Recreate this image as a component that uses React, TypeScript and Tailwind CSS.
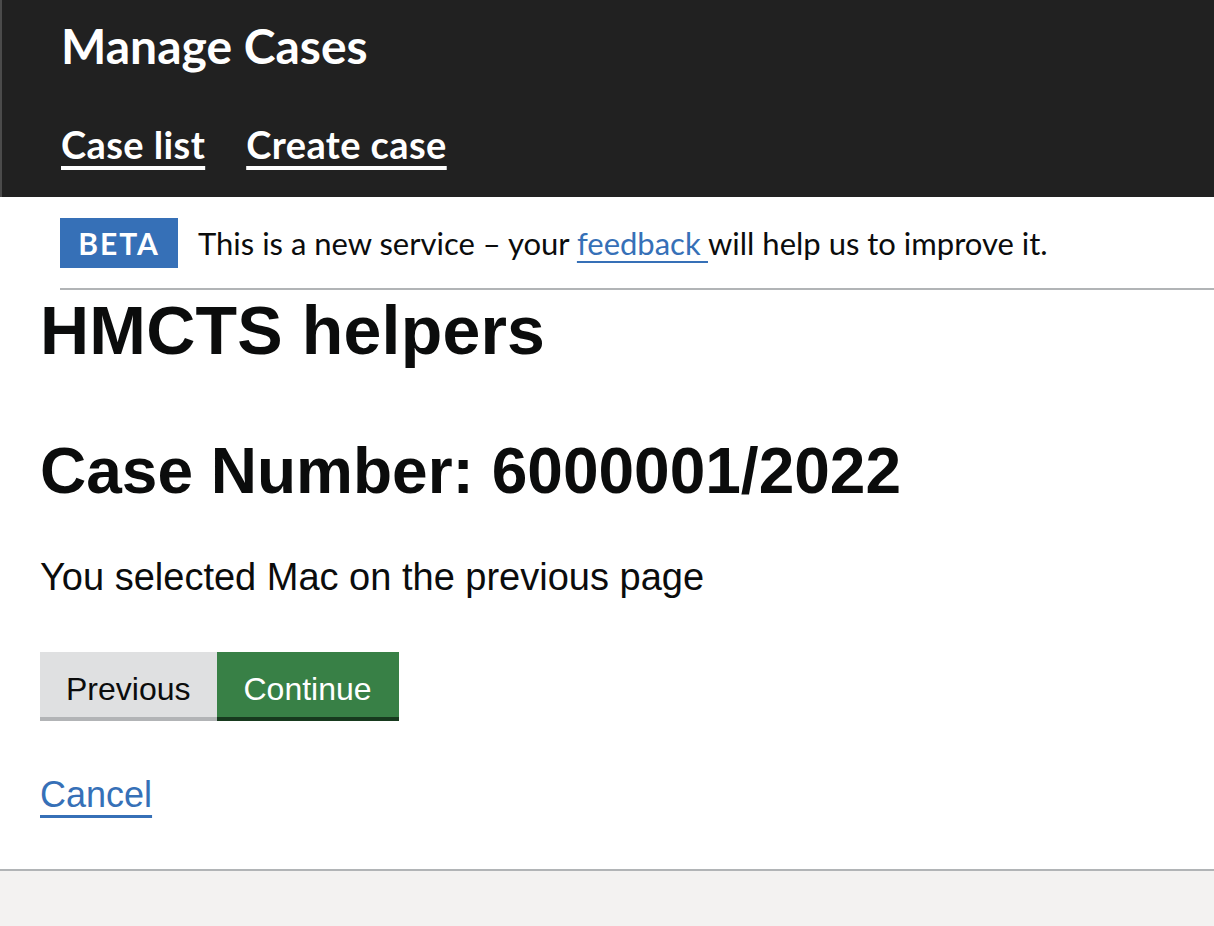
import React from "react";

export default function App() {
  return (
    <div className="min-h-screen flex flex-col bg-white text-[#0b0c0c] font-['Liberation_Sans',Arial,sans-serif]">
      <header className="h-[197px] bg-[#212121] border-l-2 border-[#4b4b4b] pl-[59px] pt-[22px] font-['Lato','Noto_Sans',sans-serif]">
        <div className="text-[48px] leading-[48px] font-bold text-white">Manage Cases</div>
        <nav className="mt-[55px] flex gap-[41px]">
          <a href="#" className="text-[38px] leading-[38px] font-bold tracking-[0.4px] text-white underline decoration-[4px] underline-offset-[7px]">Case list</a>
          <a href="#" className="text-[38px] leading-[38px] font-bold tracking-[0.4px] text-white underline decoration-[4px] underline-offset-[7px]">Create case</a>
        </nav>
      </header>

      <div className="pl-[60px] pt-[21px] font-['Lato','Noto_Sans',sans-serif]">
        <div className="flex items-center gap-[20px]">
          <span className="h-[50px] w-[118px] flex items-center justify-center bg-[#3670b7] text-white font-bold text-[30px] tracking-[2px]">BETA</span>
          <p className="text-[31px] leading-[31px] text-[#0b0c0c]">
            This is a new service – your{" "}
            <a href="#" className="text-[#3670b7] underline decoration-[2px] underline-offset-[6px]">feedback </a>
            will help us to improve it.
          </p>
        </div>
        <div className="mt-[20px] border-b-2 border-[#b1b4b6]" />
      </div>

      <main className="pl-[40px] pt-[6px] pb-[55px]">
        <h1 className="text-[68px] leading-[68px] font-bold tracking-[0.2px]">HMCTS helpers</h1>
        <h2 className="mt-[75px] text-[64px] leading-[64px] font-bold">Case Number: 6000001/2022</h2>
        <p className="mt-[55px] text-[38px] leading-[38px]">You selected Mac on the previous page</p>
        <div className="mt-[56px] flex">
          <button className="h-[69px] px-[26px] pt-[20px] pb-[12px] bg-[#dfe0e1] border-b-4 border-[#b2b4b6] text-[32px] leading-[32px] text-[#0b0c0c]">Previous</button>
          <button className="h-[69px] px-[27px] pt-[20px] pb-[12px] bg-[#388046] border-b-4 border-[#173a1e] text-[32px] leading-[32px] text-white">Continue</button>
        </div>
        <div className="mt-[56px]">
          <a href="#" className="text-[36px] leading-[36px] text-[#3670b7] underline decoration-[3px] underline-offset-[8px]">Cancel</a>
        </div>
      </main>

      <footer className="flex-1 border-t-2 border-[#b1b4b6] bg-[#f3f2f1]" />
    </div>
  );
}
